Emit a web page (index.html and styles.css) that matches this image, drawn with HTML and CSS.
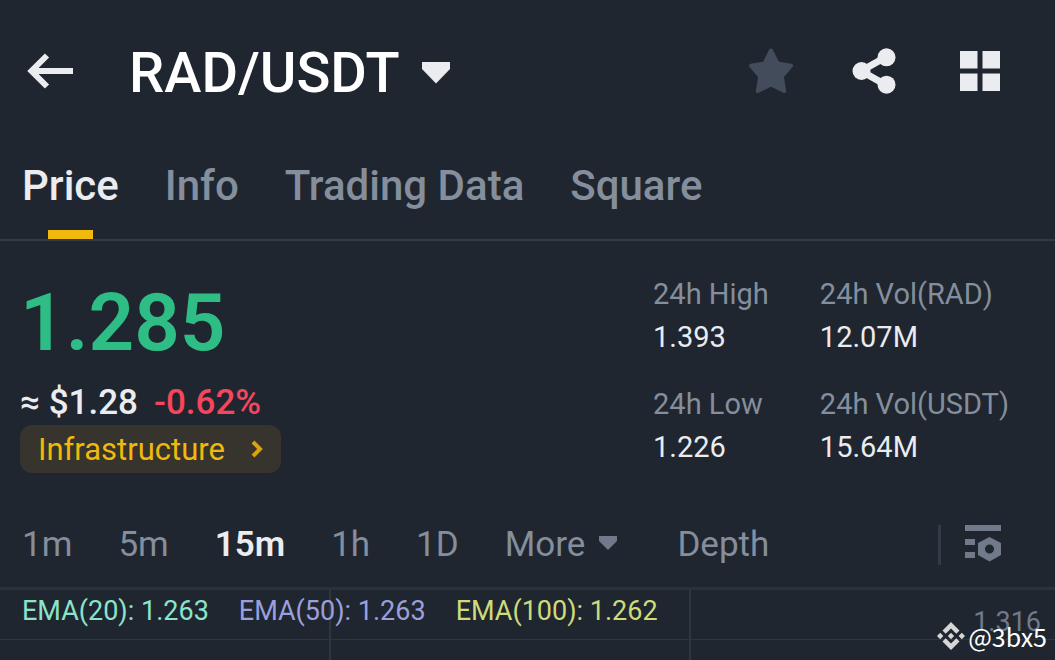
FILE: index.html
```
<!DOCTYPE html>
<html lang="en">
	<head>
		<meta charset="utf-8">
		<meta name="viewport" content="width=device-width, initial-scale=1">
		<title>RAD/USDT</title>
		<link rel="stylesheet" href="styles.css">
	</head>
	<body>
		<header class="header">
			<button class="icon-btn back" type="button" aria-label="Back">
				<svg width="46" height="36" viewBox="0 0 46 36" fill="none" stroke="#eaecef" stroke-width="6">
					<path d="M46 18H5M20 2.500L4.500 18L20 33.500" />
				</svg>
			</button>
			<h1 class="title">
				<button class="pair" type="button">RAD/USDT
					<svg width="28" height="22" viewBox="0 0 28 22" fill="#eaecef"><path d="M0 0H28V7L14 21.500L0 7Z" /></svg>
				</button>
			</h1>
			<div class="actions">
				<button class="icon-btn" type="button" aria-label="Favorite">
					<svg width="46" height="46" viewBox="0 0 46 46" fill="#434c5a" stroke="#434c5a" stroke-width="4" stroke-linejoin="round">
						<path d="M23 2.500L29.500 15.500L43 17.800L33.800 28.500L36.200 43L23 36.500L9.800 43L12.200 28.500L3 17.800L16.500 15.500Z" />
					</svg>
				</button>
				<button class="icon-btn" type="button" aria-label="Share">
					<svg width="50" height="46" viewBox="0 0 50 46" fill="#eaecef">
						<path d="M9 23L34 9M9 23L34 37" stroke="#eaecef" stroke-width="7" />
						<circle cx="9.500" cy="23" r="9" />
						<circle cx="34.500" cy="9.300" r="9" />
						<circle cx="34.500" cy="36.700" r="9" />
					</svg>
				</button>
				<button class="icon-btn" type="button" aria-label="Layout">
					<svg width="40" height="40" viewBox="0 0 40 40" fill="#eaecef">
						<path d="M0 0H17.500V17.500H0ZM22.500 0H40V17.500H22.500ZM0 22.500H17.500V40H0ZM22.500 22.500H40V40H22.500Z" />
					</svg>
				</button>
			</div>
		</header>

		<nav class="tabs">
			<a href="#" class="active">Price</a>
			<a href="#">Info</a>
			<a href="#">Trading Data</a>
			<a href="#">Square</a>
		</nav>

		<main class="main">
			<section class="ticker">
				<div class="quote">
					<p class="price">1.285</p>
					<p class="change"><span>≈ $1.28</span><span class="down">-0.62%</span></p>
					<a href="#" class="tag">Infrastructure
						<svg width="12" height="18" viewBox="0 0 12 18" fill="none" stroke="#d9a30f" stroke-width="4"><path d="M2 2L9 9L2 16" /></svg>
					</a>
				</div>
				<dl class="stats">
					<div><dt>24h High</dt><dd>1.393</dd></div>
					<div><dt>24h Vol(RAD)</dt><dd>12.07M</dd></div>
					<div><dt>24h Low</dt><dd>1.226</dd></div>
					<div><dt>24h Vol(USDT)</dt><dd>15.64M</dd></div>
				</dl>
			</section>

			<div class="intervals">
				<button type="button">1m</button>
				<button type="button">5m</button>
				<button type="button" class="active">15m</button>
				<button type="button">1h</button>
				<button type="button">1D</button>
				<button type="button">More
					<svg width="18" height="18" viewBox="0 0 18 18" fill="#717a8a"><path d="M0 0H18V5L9 14L0 5Z" /></svg>
				</button>
				<button type="button" class="depth">Depth</button>
				<button type="button" class="settings" aria-label="Indicators">
					<svg width="36" height="40" viewBox="0 0 36 40" fill="#717a8a">
						<path d="M0 0H36V6H0ZM0 14H10V20H0ZM0 27H10V33H0Z" />
						<path fill-rule="evenodd" d="M24.500 12L36 18V30L24.500 36.500L13 30V18ZM24.500 19.500A4.500 4.500 0 1 0 24.500 28.500A4.500 4.500 0 1 0 24.500 19.500Z" />
					</svg>
				</button>
			</div>

			<section class="chart">
				<ul class="legend">
					<li class="ema20">EMA(20): 1.263</li>
					<li class="ema50">EMA(50): 1.263</li>
					<li class="ema100">EMA(100): 1.262</li>
				</ul>
				<span class="scale">1.316</span>
				<p class="watermark">
					<svg width="28" height="28" viewBox="0 0 28 28" fill="#d6d6d6">
						<path d="M14 0L22.500 8.500L19.300 11.700L14 6.400L8.700 11.700L5.500 8.500Z" />
						<path d="M14 28L22.500 19.500L19.300 16.300L14 21.600L8.700 16.300L5.500 19.500Z" />
						<path d="M14 10.800L17.200 14L14 17.200L10.800 14ZM3.200 10.800L6.400 14L3.200 17.200L0 14ZM24.800 10.800L28 14L24.800 17.200L21.600 14Z" />
					</svg>
					@3bx5
				</p>
			</section>
		</main>
	</body>
</html>
```
FILE: styles.css
```
* {
	margin: 0;
	padding: 0;
	box-sizing: border-box;
}

body {
	min-height: 100vh;
	display: flex;
	flex-direction: column;
	background: #1f2630;
	color: #eaecef;
	font-family: Roboto, "Liberation Sans", sans-serif;
}

button {
	border: 0;
	background: none;
	color: inherit;
	font: inherit;
	cursor: pointer;
}

a {
	color: inherit;
	text-decoration: none;
}

svg {
	display: block;
	flex: none;
}

/* header */
.header {
	display: flex;
	align-items: center;
	height: 142px;
	padding: 0 55px 0 27px;
}

.title {
	margin-left: 56px;
	padding-top: 4px;
	color: #fff;
	font-size: 56px;
	font-weight: 500;
	line-height: 64px;
}

.pair {
	display: flex;
	align-items: center;
	gap: 22px;
}

.actions {
	display: flex;
	align-items: center;
	gap: 58px;
	margin-left: auto;
}

/* tabs */
.tabs {
	display: flex;
	gap: 46px;
	padding: 2px 22px 0;
	border-bottom: 2px solid #333b47;
	color: #848e9c;
	font-size: 42px;
	font-weight: 500;
	line-height: 84px;
}

.tabs a {
	display: flex;
	flex-direction: column;
	align-items: center;
	height: 95px;
}

.tabs .active {
	color: #eaecef;
}

.tabs .active::after {
	content: "";
	width: 45px;
	height: 9px;
	margin-top: 2px;
	background: #f0b90b;
}

.main {
	flex: 1;
	display: flex;
	flex-direction: column;
}

/* price and 24h numbers */
.ticker {
	display: flex;
	justify-content: space-between;
	padding: 32px 46px 29px 20px;
}

.price {
	color: #2ebd85;
	font-size: 80px;
	font-weight: 600;
	line-height: 100px;
}

.change {
	display: flex;
	gap: 16px;
	margin-top: 8px;
	font-size: 35px;
	font-weight: 500;
	line-height: 44px;
}

.down {
	color: #f6465d;
}

.tag {
	display: inline-flex;
	align-items: center;
	gap: 26px;
	height: 48px;
	padding: 0 18px;
	border-radius: 12px;
	background: #36342c;
	color: #f0b90b;
	font-size: 31px;
}

.stats {
	display: grid;
	grid-template-columns: auto auto;
	align-content: start;
	column-gap: 51px;
	row-gap: 24px;
	font-size: 29px;
	line-height: 43px;
}

.stats dt {
	color: #848e9c;
}

/* intervals */
.intervals {
	display: flex;
	align-items: center;
	gap: 46px;
	height: 88px;
	padding: 0 54px 0 22px;
	border-bottom: 3px solid #2b323d;
	color: #848e9c;
	font-size: 35px;
	line-height: 44px;
}

.intervals button {
	display: flex;
	align-items: center;
	gap: 14px;
}

.intervals .active {
	color: #eaecef;
	font-weight: 600;
}

.intervals .depth {
	margin-left: 14px;
}

.intervals .settings {
	margin-left: auto;
	padding-left: 24px;
	border-left: 3px solid #333b47;
}

/* chart */
.chart {
	position: relative;
	flex: 1;
	min-height: 70px;
	background:
		linear-gradient(#2f3642, #2f3642) 0 49px / 100% 1px no-repeat,
		linear-gradient(#2f3642, #2f3642) 329px 0 / 2px 100% no-repeat,
		linear-gradient(#2f3642, #2f3642) 689px 0 / 2px 100% no-repeat;
}

.legend {
	display: flex;
	gap: 30px;
	padding: 4px 22px;
	list-style: none;
	font-size: 27px;
	line-height: 34px;
}

.ema20 {
	color: #8ce3cb;
}

.ema50 {
	color: #9ba0dc;
}

.ema100 {
	color: #cddb7b;
}

.scale {
	position: absolute;
	top: 14px;
	right: 14px;
	color: #717a8a;
	font-size: 27px;
	line-height: 36px;
}

.watermark {
	position: absolute;
	right: 8px;
	top: 30px;
	display: flex;
	align-items: center;
	gap: 3px;
	color: #fff;
	font-family: "Noto Sans CJK SC", "Noto Sans", sans-serif;
	font-size: 25px;
	line-height: 32px;
}
```
